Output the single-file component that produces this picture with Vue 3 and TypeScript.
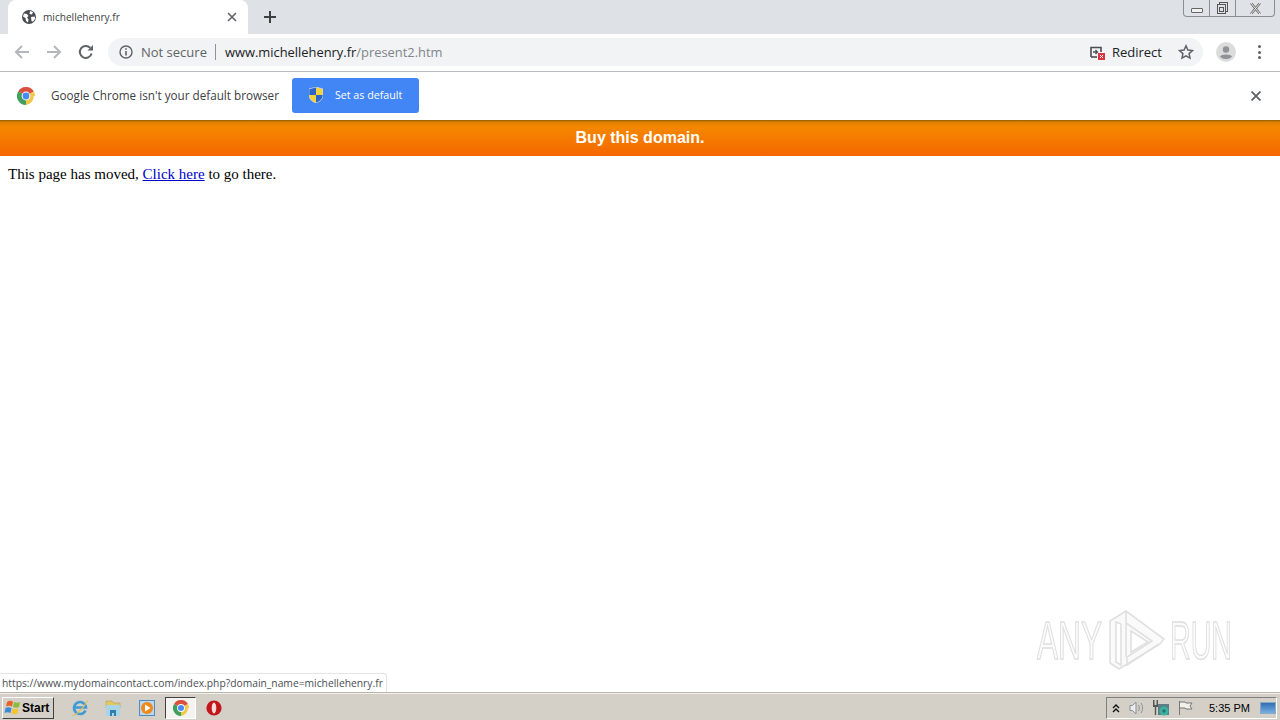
<script setup lang="ts">
const statusUrl = 'https://www.mydomaincontact.com/index.php?domain_name=michellehenry.fr'
</script>

<template>
  <div class="screen">
    <header class="tabstrip">
      <div class="tab">
        <svg class="globe" width="16" height="16" viewBox="0 0 16 16">
          <circle cx="8" cy="8" r="7" fill="#4a4d52" />
          <path d="M3 4.500l3 .5 1.500 2L6 8.500l1.500 2-.5 3-2-1.500-.5-3L2 7.500zM9 2l3 1-1 2.500-2.500-.5zM10 8l3.500-.5.8 2-2.300 3.200-1.500-.7z" fill="#fff" />
        </svg>
        <span class="tab-title">michellehenry.fr</span>
        <svg class="tab-close" width="10" height="10" viewBox="0 0 10 10"><path d="M1 1l8 8M9 1l-8 8" stroke="#5f6368" stroke-width="1.600" /></svg>
      </div>
      <svg class="new-tab" width="12" height="12" viewBox="0 0 12 12"><path d="M6 0v12M0 6h12" stroke="#3c4043" stroke-width="2" /></svg>
      <div class="win-controls">
        <span class="win-btn min"><i></i></span>
        <span class="win-btn max">
          <svg width="13" height="13" viewBox="0 0 13 13" fill="none" stroke="#555"><rect x="3.500" y="0.500" width="8" height="9" /><rect x="1.500" y="2.500" width="8" height="9" fill="#dee1e6" /><rect x="3.500" y="5.500" width="4" height="4" /></svg>
        </span>
        <span class="win-btn close">
          <svg width="13" height="11" viewBox="0 0 13 11"><path d="M2 0l9 11M11 0L2 11" stroke="#666" stroke-width="2.400" /><path d="M2 0l9 11M11 0L2 11" stroke="#eee" stroke-width="1" /></svg>
        </span>
      </div>
    </header>

    <nav class="toolbar">
      <svg class="nav-icon" width="16" height="16" viewBox="0 0 16 16" fill="none" stroke="#b4b7bb" stroke-width="2"><path d="M15 8H2M8 2L2 8l6 6" /></svg>
      <svg class="nav-icon fwd" width="16" height="16" viewBox="0 0 16 16" fill="none" stroke="#b4b7bb" stroke-width="2"><path d="M1 8h13M8 2l6 6-6 6" /></svg>
      <svg class="nav-icon reload" width="16" height="16" viewBox="0 0 16 16" fill="none"><path d="M13.600 9.500A6 6 0 1 1 12.200 3.800" stroke="#5f6368" stroke-width="2" /><path d="M9.500 6.500H15V1z" fill="#5f6368" /></svg>
      <div class="omnibox">
        <svg width="14" height="14" viewBox="0 0 14 14" fill="none"><circle cx="7" cy="7" r="6" stroke="#5f6368" stroke-width="1.400" /><path d="M7 6v4.400" stroke="#5f6368" stroke-width="1.600" /><path d="M7 3.200v1.600" stroke="#5f6368" stroke-width="1.600" /></svg>
        <span class="not-secure">Not secure</span>
        <span class="omni-sep"></span>
        <span class="url">www.michellehenry.fr<span class="url-path">/present2.htm</span></span>
        <span class="omni-spacer"></span>
        <svg class="redirect-icon" width="15" height="15" viewBox="0 0 15 15" fill="none">
          <path d="M1 12V2.500h10V7" stroke="#4a4d52" stroke-width="1.600" />
          <path d="M1 12h6" stroke="#4a4d52" stroke-width="1.600" />
          <path d="M3 7h4M5.500 5l2 2-2 2" stroke="#4a4d52" stroke-width="1.300" />
          <rect x="8" y="8" width="7" height="7" fill="#d9363e" />
          <path d="M10 10l3 3M13 10l-3 3" stroke="#fff" />
        </svg>
        <span class="redirect">Redirect</span>
        <svg class="star" width="16" height="16" viewBox="0 0 16 16" fill="none"><path d="M8 1.800l1.900 4.200 4.600.5-3.400 3.100.9 4.500L8 11.800l-4 2.300.9-4.500L1.500 6.500 6.100 6z" stroke="#5f6368" stroke-width="1.500" /></svg>
      </div>
      <div class="avatar">
        <svg width="20" height="20" viewBox="0 0 20 20"><circle cx="10" cy="10" r="10" fill="#dcdcdc" /><circle cx="10" cy="7.500" r="3.200" fill="#8f9296" /><path d="M4 14.500c1-2.800 11-2.800 12 0-1.500 2-4 2.600-6 2.600s-4.500-.6-6-2.600z" fill="#8f9296" /></svg>
      </div>
      <div class="kebab"><i></i><i></i><i></i></div>
    </nav>

    <section class="infobar">
      <svg class="chrome-logo" width="18" height="18" viewBox="0 0 18 18">
        <path d="M9 9L1.200 4.500A9 9 0 0 1 16.800 4.500z" fill="#d9503f" />
        <path d="M9 9h7.800A9 9 0 0 1 9 18z" fill="#f2c84b" />
        <path d="M9 9L9 18A9 9 0 0 1 1.200 4.500z" fill="#3f9f5c" />
        <path d="M9 9L16.800 4.500A9 9 0 0 1 18 9H9z" fill="#f2c84b" />
        <circle cx="9" cy="9" r="4.400" fill="#fff" />
        <circle cx="9" cy="9" r="3.400" fill="#4a8af4" />
      </svg>
      <span class="infobar-text">Google Chrome isn't your default browser</span>
      <button class="default-btn" type="button">
        <svg width="14" height="16" viewBox="0 0 14 16">
          <path d="M7 0l7 2v6c0 4-3 6.500-7 8-4-1.500-7-4-7-8V2z" fill="#f3d23c" />
          <path d="M7 0v8H0V2zM7 8h7c0 4-3 6.500-7 8z" fill="#2c66c8" />
          <path d="M7 0l7 2v6c0 4-3 6.500-7 8-4-1.500-7-4-7-8V2z" fill="none" stroke="#dfe7f5" stroke-width=".6" />
        </svg>
        <span>Set as default</span>
      </button>
      <span class="omni-spacer"></span>
      <svg class="infobar-close" width="10" height="10" viewBox="0 0 10 10"><path d="M0.500 0.500l9 9M9.500 0.500l-9 9" stroke="#5f6368" stroke-width="1.800" /></svg>
    </section>

    <main class="page">
      <div class="banner">Buy this domain.</div>
      <p class="moved">This page has moved, <a href="#">Click here</a> to go there.</p>
    </main>

    <div class="status-bubble">{{ statusUrl }}</div>

    <div class="watermark">
      <span class="wm-word any">ANY</span>
      <svg class="wm-logo" width="58" height="60" viewBox="0 0 58 60" fill="none" stroke="#e0e0e0" stroke-width="1.600">
        <path d="M3 11L19 1l38 28-4 5L12 59 3 53z" fill="#fafafa" />
        <path d="M9 12v40l5 3V14z" fill="#fff" />
        <path d="M19 1v12l26 18-25 16v8l32-21" />
        <path d="M19 13v34" />
        <path d="M24 21l17 11-17 10z" fill="#fff" />
      </svg>
      <span class="wm-word run">RUN</span>
    </div>

    <footer class="taskbar">
      <button class="start" type="button">
        <svg width="17" height="16" viewBox="0 0 17 16">
          <path d="M3 2c2-1.500 4-1.500 6-.5L8 6.500C6 5.500 4 5.500 2 6.500z" fill="#e8632c" />
          <path d="M10 2c2 1 4 1 6 0l-1 5c-2 1-4 .8-6 0z" fill="#8dbb3a" />
          <path d="M1.500 8c2-1 4-1 6 0l-1 5c-2-1-4-1-6 0z" fill="#3b8ad9" />
          <path d="M8.500 8.500c2 .8 4 1 6 0l-1 5c-2 1-4 .8-6 0z" fill="#f3c331" />
        </svg>
        <span>Start</span>
      </button>
      <div class="quick">
        <svg class="q-ie" width="18" height="18" viewBox="0 0 18 18" fill="none">
          <path d="M14.500 11.500A6 6 0 1 1 15 8.500H4.500" stroke="#3f9ad6" stroke-width="2.600" />
          <path d="M1.500 16.500C4 17 12 10 16.500 1.500" stroke="#dfc056" stroke-width="1.200" />
        </svg>
        <svg class="q-folder" width="18" height="18" viewBox="0 0 18 18">
          <path d="M2 2h6l1.500 2H16v5H2z" fill="#e2c860" stroke="#b59c48" stroke-width=".6" />
          <rect x="2" y="6" width="14" height="11" fill="#a9d4e6" />
          <path d="M6 17v-6h6v6h-2v-3H8v3z" fill="#2f7fb3" />
        </svg>
        <svg class="q-media" width="18" height="18" viewBox="0 0 18 18">
          <rect x="1.500" y="1.500" width="15" height="15" fill="#bcd6ec" stroke="#4f8cc0" />
          <circle cx="9" cy="9" r="6" fill="#ee8a1c" />
          <path d="M7 5.500L12.500 9 7 12.500z" fill="#fff" />
        </svg>
        <span class="task-active">
          <svg width="16" height="16" viewBox="0 0 18 18">
            <path d="M9 9L1.200 4.500A9 9 0 0 1 16.800 4.500z" fill="#d9503f" />
            <path d="M9 9h7.800A9 9 0 0 1 9 18z" fill="#f2c84b" />
            <path d="M9 9L16.800 4.500A9 9 0 0 1 18 9H9z" fill="#f2c84b" />
            <path d="M9 9L9 18A9 9 0 0 1 1.200 4.500z" fill="#3f9f5c" />
            <circle cx="9" cy="9" r="4.400" fill="#fff" />
            <circle cx="9" cy="9" r="3.400" fill="#4a8af4" />
          </svg>
        </span>
        <svg class="q-opera" width="16" height="16" viewBox="0 0 16 16">
          <circle cx="8" cy="8" r="7.600" fill="#c2161b" />
          <ellipse cx="8" cy="8" rx="2.300" ry="5.400" fill="#f7dcdc" />
        </svg>
      </div>
      <span class="omni-spacer"></span>
      <div class="tray">
        <svg class="t-chev" width="8" height="9" viewBox="0 0 8 9" fill="none" stroke="#111" stroke-width="1.400"><path d="M1 4l3-3 3 3M1 8l3-3 3 3" /></svg>
        <svg class="t-speaker" width="16" height="16" viewBox="0 0 16 16" fill="none" stroke="#8a8f94">
          <path d="M1 5.500h2.500L7 2v12l-3.500-3.500H1z" fill="#ececec" />
          <path d="M9.500 5c1 2 1 4 0 6M12 3c2 3 2 7 0 10" />
        </svg>
        <svg class="t-net" width="18" height="18" viewBox="0 0 18 18">
          <rect x="6" y="5" width="11" height="11" fill="#5c7f86" />
          <path d="M1 1h1.500v5h2V1H6v7H4.200v8H2.800V8H1z" fill="#555" />
          <circle cx="12" cy="12" r="4.500" fill="#3bb2a0" />
          <circle cx="12" cy="12" r="1.800" fill="#2f6f78" />
        </svg>
        <svg class="t-flag" width="16" height="16" viewBox="0 0 16 16" fill="none" stroke="#777">
          <path d="M2.500 1v14M3 2h5l1 1h6l-2 3 2 3H9L8 8H3" fill="#f2f0ea" />
        </svg>
        <span class="clock">5:35 PM</span>
        <span class="show-desktop"></span>
      </div>
    </footer>
  </div>
</template>

<style scoped>
.screen {
  position: relative;
  width: 1280px;
  height: 720px;
  display: flex;
  flex-direction: column;
  overflow: hidden;
  background: #fff;
  font-family: "Open Sans", "Liberation Sans", sans-serif;
}

.tabstrip {
  position: relative;
  height: 34px;
  flex: none;
  display: flex;
  align-items: flex-end;
  padding-left: 8px;
  background: #dee1e6;
}

.tab {
  width: 240px;
  height: 34px;
  box-sizing: border-box;
  padding: 0 11px 0 13px;
  display: flex;
  align-items: center;
  background: #fff;
  border-radius: 8px 8px 0 0;
}

.tab-title {
  margin-left: 6px;
  flex: 1;
  font-size: 10.100px;
  color: #3c4043;
}

.new-tab {
  margin: 0 0 11px 16px;
}

.win-controls {
  position: absolute;
  top: 0;
  right: 5px;
  width: 92px;
  height: 17px;
  display: flex;
  box-sizing: border-box;
  border: 1px solid #8a8e93;
  border-top: 0;
  border-radius: 0 0 4px 4px;
  background: #dfe2e7;
}

.win-btn {
  display: flex;
  align-items: center;
  justify-content: center;
  border-right: 1px solid #8a8e93;
}

.win-btn.min {
  width: 25px;
}

.win-btn.min i {
  width: 12px;
  height: 5px;
  margin-top: 4px;
  box-sizing: border-box;
  border: 1px solid #666;
  background: #f2f2f2;
  border-radius: 1px;
}

.win-btn.max {
  width: 25px;
}

.win-btn.close {
  flex: 1;
  border-right: 0;
}

.toolbar {
  height: 38px;
  flex: none;
  box-sizing: border-box;
  display: flex;
  align-items: center;
  padding: 0 0 1px 14px;
  background: #fff;
  border-bottom: 1px solid #b9bbbe;
}

.nav-icon.fwd,
.nav-icon.reload {
  margin-left: 16px;
}

.omnibox {
  width: 1095px;
  height: 28px;
  margin-left: 14px;
  box-sizing: border-box;
  padding: 0 9px 0 11px;
  display: flex;
  align-items: center;
  background: #f1f3f4;
  border-radius: 14px;
  font-size: 13px;
}

.not-secure {
  margin-left: 8px;
  color: #5f6368;
}

.omni-sep {
  width: 1px;
  height: 16px;
  margin: 0 9px 0 8px;
  background: #8f9296;
}

.url {
  font-size: 12.900px;
  color: #202124;
}

.url-path {
  color: #80868b;
}

.omni-spacer {
  flex: 1;
}

.redirect {
  margin-left: 7px;
  color: #202124;
}

.star {
  margin-left: 16px;
}

.avatar {
  margin-left: 13px;
  display: flex;
}

.kebab {
  margin-left: 22px;
  display: flex;
  flex-direction: column;
  gap: 2.500px;
}

.kebab i {
  width: 3px;
  height: 3px;
  background: #5f6368;
  border-radius: 50%;
}

.infobar {
  height: 48px;
  flex: none;
  box-sizing: border-box;
  padding: 0 19px 2px 17px;
  display: flex;
  align-items: center;
  background: #fff;
}

.chrome-logo,
.infobar-close {
  margin-top: 2px;
}

.infobar-text {
  margin-left: 16px;
  font-size: 11.700px;
  color: #3c4043;
}

.default-btn {
  width: 127px;
  height: 35px;
  margin-left: 13px;
  padding: 0 0 0 17px;
  display: flex;
  align-items: center;
  gap: 12px;
  border: 0;
  border-radius: 3px;
  background: #4285f4;
  color: #fff;
  font-family: inherit;
  font-size: 10.700px;
}

.page {
  flex: 1;
}

.banner {
  height: 36px;
  line-height: 35px;
  text-align: center;
  background: linear-gradient(#8a5c00 0, #e08000 2px, #f58800 7px, #f56600 100%);
  color: #fff;
  font-family: "Liberation Sans", Arial, sans-serif;
  font-size: 16px;
  font-weight: bold;
}

.moved {
  margin: 9px 8px 0;
  font-family: "Liberation Serif", "Times New Roman", serif;
  font-size: 15px;
  line-height: 18px;
  color: #000;
}

.moved a {
  color: #0000cc;
}

.status-bubble {
  position: absolute;
  left: 0;
  bottom: 28px;
  height: 19px;
  box-sizing: border-box;
  padding: 0 3px 0 2px;
  line-height: 18px;
  background: #fff;
  border: 1px solid #e4e4e4;
  border-left: 0;
  border-bottom: 0;
  border-radius: 0 3px 0 0;
  font-size: 10.300px;
  color: #4a4d52;
  white-space: nowrap;
}

.watermark {
  position: absolute;
  left: 1037px;
  top: 610px;
  display: flex;
  align-items: center;
  gap: 5px;
  filter: blur(0.5px);
}

.wm-word {
  display: block;
  height: 60px;
  line-height: 60px;
  font-family: "Liberation Sans", Arial, sans-serif;
  font-size: 54px;
  white-space: nowrap;
  color: #fbfbfb;
  -webkit-text-stroke: 1.500px #dedede;
  transform-origin: left center;
}

.wm-word.any {
  width: 65px;
  transform: scaleX(0.585);
}

.wm-word.run {
  width: 62px;
  transform: scaleX(0.53);
}

.taskbar {
  height: 28px;
  flex: none;
  box-sizing: border-box;
  display: flex;
  align-items: center;
  padding: 3px 3px 0 2px;
  background: #d4d0c8;
  border-top: 1px solid #b9b6ae;
  box-shadow: inset 0 1px 0 #f2f0ea;
}

.start {
  width: 52px;
  height: 22px;
  padding: 0 0 0 1px;
  display: flex;
  align-items: center;
  gap: 1px;
  box-sizing: border-box;
  border: 1px solid;
  border-color: #fff #404040 #404040 #fff;
  background: #d4d0c8;
  font-family: "Liberation Sans", Arial, sans-serif;
  font-size: 12px;
  font-weight: bold;
  color: #000;
}

.quick {
  margin-left: 17px;
  display: flex;
  align-items: center;
}

.q-folder {
  margin-left: 15px;
}

.q-media {
  margin-left: 16px;
}

.task-active {
  width: 31px;
  height: 22px;
  margin-left: 9px;
  display: flex;
  align-items: center;
  justify-content: center;
  box-sizing: border-box;
  border: 1px solid;
  border-color: #404040 #fff #fff #404040;
  background: #f4f3f0;
}

.q-opera {
  margin-left: 10px;
}

.tray {
  width: 171px;
  height: 22px;
  box-sizing: border-box;
  display: flex;
  align-items: center;
  padding-left: 5px;
  border: 1px solid;
  border-color: #808080 #fff #fff #808080;
}

.t-speaker {
  margin-left: 9px;
}

.t-net,
.t-flag {
  margin-left: 7px;
}

.clock {
  margin-left: 16px;
  font-family: "Liberation Sans", Arial, sans-serif;
  font-size: 11px;
  white-space: nowrap;
  color: #000;
}

.show-desktop {
  width: 16px;
  height: 12px;
  margin-left: 10px;
  background: linear-gradient(#2f6fb5, #79aee0);
  border: 1px solid #8ba9c4;
  box-sizing: border-box;
}
</style>
